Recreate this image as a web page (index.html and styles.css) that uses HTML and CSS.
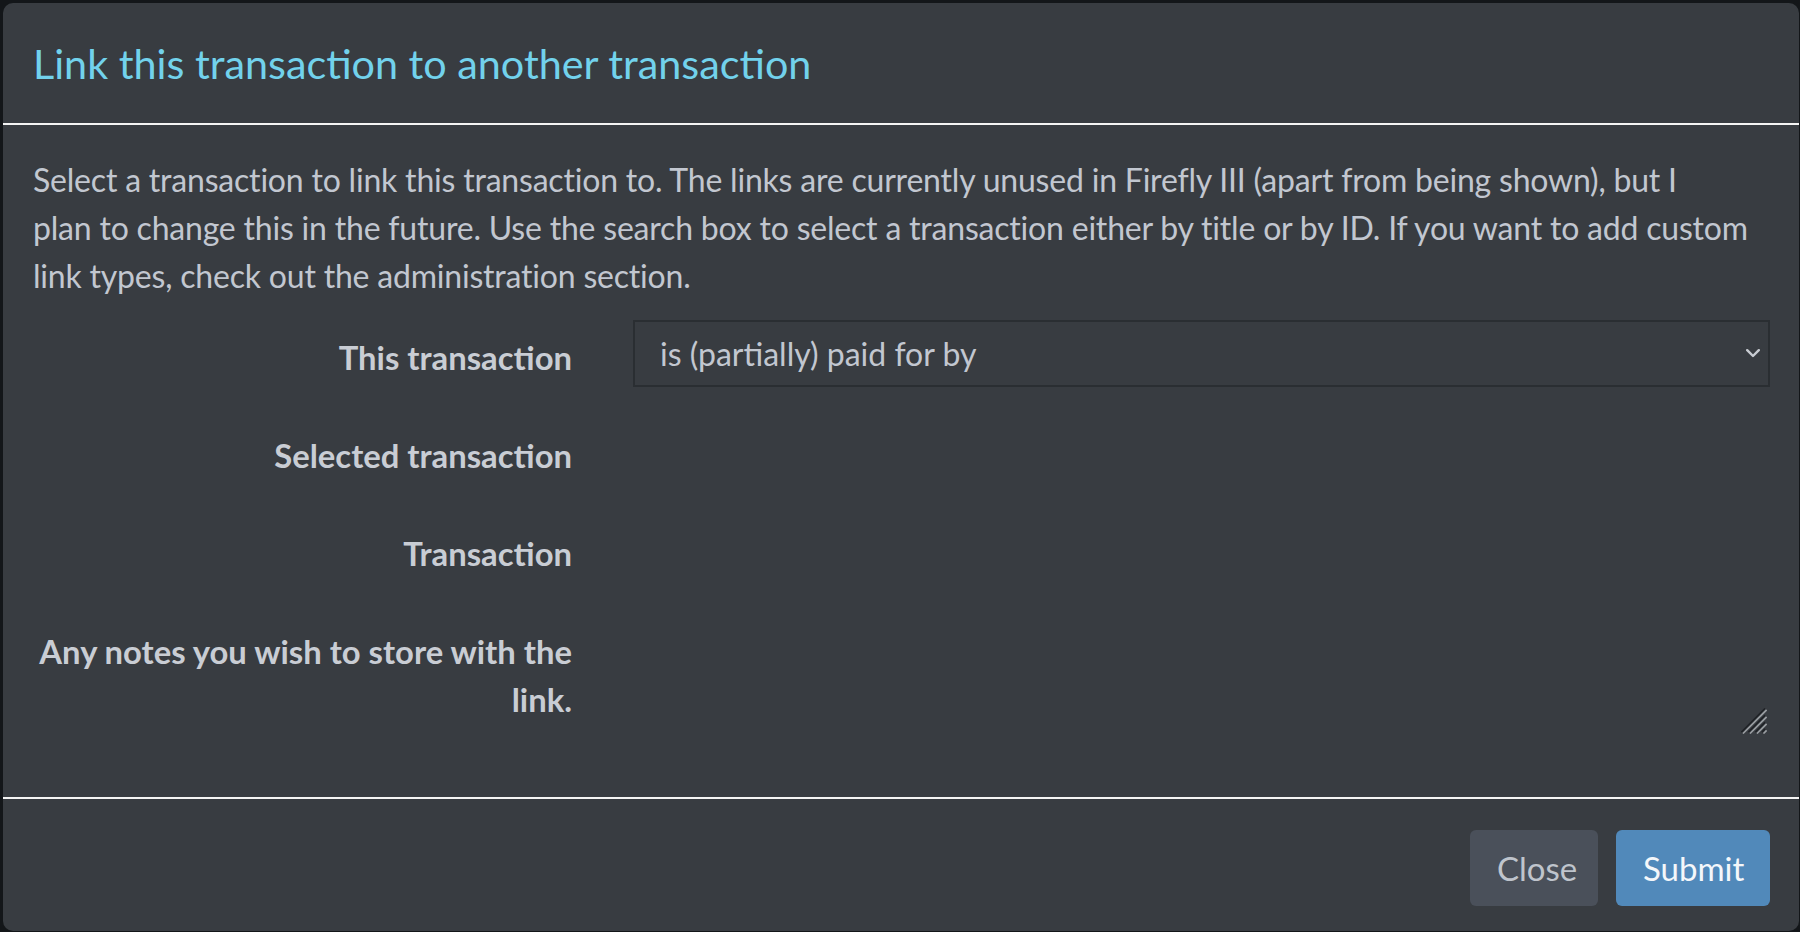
FILE: index.html
```html
<!DOCTYPE html>
<html lang="en">
<head>
<meta charset="utf-8">
<title>Link transaction</title>
<link rel="stylesheet" href="styles.css">
</head>
<body>
<div class="modal">
  <div class="modal-header">
    <h4 class="modal-title">Link this transaction to another transaction</h4>
  </div>
  <div class="modal-body">
    <p class="intro">Select a transaction to link this transaction to. The links are currently unused in Firefly III (apart from being shown), but I<br>plan to change this in the future. Use the search box to select a transaction either by title or by ID. If you want to add custom<br>link types, check out the administration section.</p>
    <div class="form-row">
      <label class="form-label">This transaction</label>
      <div class="select">
        <span class="select-text">is (partially) paid for by</span>
        <svg class="chevron" width="14" height="9" viewBox="0 0 14 9"><path d="M1.2 1.2 L7 7 L12.8 1.2" fill="none" stroke="#c8ccd2" stroke-width="2.4" stroke-linecap="round" stroke-linejoin="round"/></svg>
      </div>
    </div>
    <div class="form-row">
      <label class="form-label">Selected transaction</label>
      <div class="empty"></div>
    </div>
    <div class="form-row">
      <label class="form-label">Transaction</label>
      <div class="empty"></div>
    </div>
    <div class="form-row">
      <label class="form-label">Any notes you wish to store with the link.</label>
      <div class="notes-wrap">
        <textarea class="notes"></textarea>
        <svg class="resizer" width="26" height="26" viewBox="0 0 26 26">
          <g stroke-width="1.6" stroke-linecap="square">
            <path d="M1 23.5 L23.5 1" stroke="#1f2226"/>
            <path d="M2.5 25 L25 2.5" stroke="#9a9ea2"/>
            <path d="M8 23.5 L23.5 8" stroke="#1f2226"/>
            <path d="M9.5 25 L25 9.5" stroke="#9a9ea2"/>
            <path d="M15 23.5 L23.5 15" stroke="#1f2226"/>
            <path d="M16.5 25 L25 16.5" stroke="#9a9ea2"/>
            <path d="M21.5 23.5 L23.5 21.5" stroke="#1f2226"/>
            <path d="M23 25 L25 23" stroke="#9a9ea2"/>
          </g>
        </svg>
      </div>
    </div>
  </div>
  <div class="modal-footer">
    <button class="btn btn-close">Close</button>
    <button class="btn btn-submit">Submit</button>
  </div>
</div>
</body>
</html>
```
FILE: styles.css
```css
html, body {
  margin: 0;
  padding: 0;
  background: #131619;
  height: 932px;
  overflow: hidden;
}
body {
  font-family: Lato, "Liberation Sans", sans-serif;
  color: #c2c7d0;
  padding: 3px 1px 0 3px;
  box-sizing: border-box;
}
.modal {
  background: #383c41;
  border-radius: 10px;
  height: 928px;
  display: flex;
  flex-direction: column;
}
.modal-header {
  height: 120px;
  padding: 0 29px 0 30px;
  display: flex;
  align-items: center;
  border-bottom: 2px solid #f4f4f4;
}
.modal-title {
  margin: 0;
  font-size: 41.3px;
  font-weight: 400;
  color: #72d2ec;
  line-height: normal;
}
.modal-body {
  padding: 31px 29px 30px 30px;
  font-size: 32px;
  line-height: 48px;
}
.intro {
  margin: 0 0 20px 0;
  letter-spacing: -0.2px;
  white-space: nowrap;
}
.form-row {
  display: grid;
  grid-template-columns: 539px 1fr;
  column-gap: 61px;
  margin-bottom: 31px;
}
.form-label {
  text-align: right;
  font-weight: 700;
  font-size: 32.8px;
  color: #c9cdd4;
  padding: 14px 0 5px 0;
}
.select {
  height: 67px;
  box-sizing: border-box;
  border: 2px solid #2a2e32;
  background: #383c41;
  display: flex;
  align-items: center;
  justify-content: space-between;
  padding: 0 8px 0 25px;
}
.select-text {
  color: #c2c7d0;
}
.chevron {
  display: block;
}
.notes-wrap {
  position: relative;
  height: 122px;
}
.notes {
  display: block;
  width: 100%;
  height: 122px;
  box-sizing: border-box;
  border: 2px solid #383c41;
  background: #383c41;
  color: #c2c7d0;
  font: inherit;
  margin: 0;
  outline: none;
  resize: none;
}
.resizer {
  position: absolute;
  right: 3px;
  bottom: 2px;
  display: block;
}
.modal-footer {
  margin-top: auto;
  border-top: 2px solid #f4f4f4;
  padding: 31px 29px 25px 30px;
  display: flex;
  justify-content: flex-end;
  gap: 18px;
}
.btn {
  height: 76px;
  border: none;
  border-radius: 6px;
  font-family: Lato, "Liberation Sans", sans-serif;
  font-size: 33px;
  padding: 0 27px;
  cursor: pointer;
}
.btn-close {
  background: #4a505a;
  color: #bfc4cc;
  width: 128px;
}
.btn-submit {
  background: #5189ba;
  color: #f4f7fa;
  width: 154px;
}
```
